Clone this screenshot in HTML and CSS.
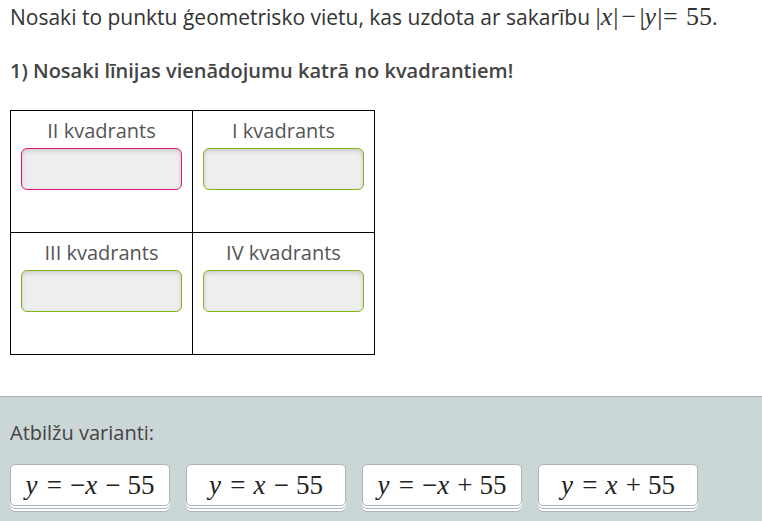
FILE: index.html
```html
<!DOCTYPE html>
<html lang="lv">
<head>
    <meta charset="UTF-8">
    <meta name="viewport" content="width=device-width, initial-scale=1.0">
    <title>Kvadranti</title>
    <link rel="stylesheet" href="styles.css">
</head>
<body>

<div class="task">
    <p class="task-title">Nosaki to punktu ģeometrisko vietu, kas uzdota ar sakarību
        <span class="math title-math">|<i>x</i>|<span class="bin">−</span>|<i>y</i>|<span class="rel">=</span>55</span>.</p>

    <p class="task-step">1) Nosaki līnijas vienādojumu katrā no kvadrantiem!</p>

    <table class="quadrants">
        <tr>
            <td>
                <div class="cell-label">II kvadrants</div>
                <div class="drop-box wrong"></div>
            </td>
            <td>
                <div class="cell-label">I kvadrants</div>
                <div class="drop-box"></div>
            </td>
        </tr>
        <tr>
            <td>
                <div class="cell-label">III kvadrants</div>
                <div class="drop-box"></div>
            </td>
            <td>
                <div class="cell-label">IV kvadrants</div>
                <div class="drop-box"></div>
            </td>
        </tr>
    </table>
</div>

<div class="answers">
    <p class="answers-title">Atbilžu varianti:</p>
    <div class="card-row">
        <div class="card"><span class="math"><i>y</i><span class="rel">=</span>−<i>x</i><span class="bin">−</span>55</span></div>
        <div class="card"><span class="math"><i>y</i><span class="rel">=</span><i>x</i><span class="bin">−</span>55</span></div>
        <div class="card"><span class="math"><i>y</i><span class="rel">=</span>−<i>x</i><span class="bin">+</span>55</span></div>
        <div class="card"><span class="math"><i>y</i><span class="rel">=</span><i>x</i><span class="bin">+</span>55</span></div>
    </div>
</div>

</body>
</html>
```

FILE: styles.css
```css
body {
    margin: 0;
    font-family: "Open Sans", Arial, sans-serif;
    color: #333;
    background-color: #fff;
}

.task {
    padding: 4px 10px 41px 10px;
}

.task-title {
    margin: 0;
    font-size: 21px;
    line-height: 27px;
}

.task-step {
    margin: 26px 0 26px 0;
    font-size: 20px;
    line-height: 27px;
    font-weight: 600;
    color: #444;
}

.math {
    font-family: "Liberation Serif", "Times New Roman", serif;
    white-space: nowrap;
}

.math i {
    font-style: italic;
    margin-right: 0.04em;
}

.math .rel {
    margin: 0 0.3em;
}

.math .bin {
    margin: 0 0.26em;
}

.title-math {
    font-size: 26px;
    line-height: 20px;
}

.title-math .bin {
    margin: 0 0.12em;
}

.title-math .rel {
    margin: 0 0.32em 0 0.02em;
}

.quadrants {
    border-collapse: collapse;
}

.quadrants td {
    border: 1px solid #000;
    width: 161px;
    height: 121px;
    padding: 0 10px;
    vertical-align: top;
    text-align: center;
}

.cell-label {
    margin-top: 6px;
    font-size: 20px;
    line-height: 27px;
    color: #555;
}

.drop-box {
    height: 40px;
    margin-top: 4px;
    border: 1px solid #80b41a;
    border-radius: 6px;
    background-color: #eee;
    box-shadow: inset 0 2px 4px rgba(0, 0, 0, 0.15);
}

.drop-box.wrong {
    border-color: #e0177f;
}

.answers {
    background-color: #cbd6d7;
    border-top: 1px solid #a6b5b5;
    padding: 22px 10px 20px 10px;
    min-height: 200px;
}

.answers-title {
    margin: 0 0 18px 0;
    font-size: 20px;
    line-height: 27px;
    color: #444;
}

.card-row {
    display: flex;
    gap: 16px;
}

.card {
    width: 158px;
    height: 40px;
    line-height: 38px;
    text-align: center;
    background: #fff;
    border: 1px solid #a9b5b6;
    border-radius: 5px;
    font-size: 27px;
    color: #222;
    box-shadow: 0 2px 0 #fff, 0 3px 0 #a9b5b6, 0 5px 0 #fff, 0 6px 0 #a9b5b6;
}
```
